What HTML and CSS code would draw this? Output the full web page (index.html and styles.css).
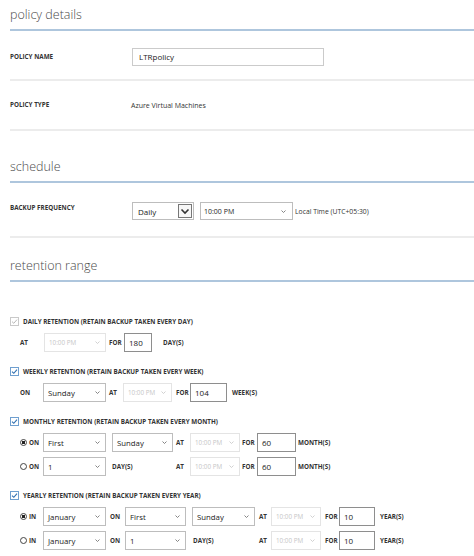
FILE: index.html
```html
<!DOCTYPE html>
<html>
<head>
<meta charset="utf-8">
<link rel="stylesheet" href="styles.css">
</head>
<body>
<div class="page">
  <h2 class="section-title">policy details</h2>
  <div class="field field-name">
    <div class="field-label">Policy name</div>
    <div class="text-input">LTRpolicy</div>
  </div>
  <div class="field">
    <div class="field-label">Policy type</div>
    <div class="field-value">Azure Virtual Machines</div>
  </div>

  <h2 class="section-title mid">schedule</h2>
  <div class="field field-top">
    <div class="field-label">Backup frequency</div>
    <div class="controls">
      <div class="sel sel-box w62">Daily
        <span class="arrow-box"><svg width="10" height="7" viewBox="0 0 10 7"><polyline points="1.5,1.5 5,5 8.5,1.5" fill="none" stroke="#333" stroke-width="1.6"/></svg></span>
      </div>
      <div class="sel time w93">10:00 PM <svg class="chev" width="5" height="3" viewBox="0 0 5 3"><polyline points="0.5,0.5 2.5,2.5 4.5,0.5" fill="none" stroke="#777" stroke-width="0.9"/></svg></div>
      <span class="tz">Local Time (UTC+05:30)</span>
    </div>
  </div>

  <h2 class="section-title ret">retention range</h2>

  <div class="retention">
    <div class="ret-group">
      <div class="ret-check">
        <svg class="cb" width="9" height="9" viewBox="0 0 9 9"><rect x="0.5" y="0.5" width="8" height="8" fill="#fff" stroke="#c9c9c9"/><polyline points="2,4.6 3.8,6.3 7,2.6" fill="none" stroke="#b9b9b9" stroke-width="1"/></svg>
        <span>Daily retention (retain backup taken every day)</span>
      </div>
      <div class="ret-row">
        <span class="lbl w24">At</span>
        <div class="sel dis w62">10:00 PM <svg class="chev" width="5" height="3" viewBox="0 0 5 3"><polyline points="0.5,0.5 2.5,2.5 4.5,0.5" fill="none" stroke="#ccc" stroke-width="0.9"/></svg></div>
        <span class="lbl w18 pl3">For</span>
        <div class="num w28">180</div>
        <span class="lbl pl11">Day(s)</span>
      </div>
    </div>

    <div class="ret-group">
      <div class="ret-check">
        <svg class="cb" width="9" height="9" viewBox="0 0 9 9"><rect x="0.5" y="0.5" width="8" height="8" fill="#fff" stroke="#6f9fcf"/><polyline points="2,4.6 3.8,6.3 7,2.6" fill="none" stroke="#2f6fb0" stroke-width="1.1"/></svg>
        <span>Weekly retention (retain backup taken every week)</span>
      </div>
      <div class="ret-row">
        <span class="lbl w23">On</span>
        <div class="sel w63">Sunday <svg class="chev" width="5" height="3" viewBox="0 0 5 3"><polyline points="0.5,0.5 2.5,2.5 4.5,0.5" fill="none" stroke="#777" stroke-width="0.9"/></svg></div>
        <span class="lbl w17 pl3">At</span>
        <div class="sel dis w49">10:00 PM <svg class="chev" width="5" height="3" viewBox="0 0 5 3"><polyline points="0.5,0.5 2.5,2.5 4.5,0.5" fill="none" stroke="#ccc" stroke-width="0.9"/></svg></div>
        <span class="lbl w18 pl4">For</span>
        <div class="num w37">104</div>
        <span class="lbl pl5">Week(s)</span>
      </div>
    </div>

    <div class="ret-group">
      <div class="ret-check">
        <svg class="cb" width="9" height="9" viewBox="0 0 9 9"><rect x="0.5" y="0.5" width="8" height="8" fill="#fff" stroke="#6f9fcf"/><polyline points="2,4.6 3.8,6.3 7,2.6" fill="none" stroke="#2f6fb0" stroke-width="1.1"/></svg>
        <span>Monthly retention (retain backup taken every month)</span>
      </div>
      <div class="ret-row">
        <span class="lbl radio-lbl w23"><span class="radio on"></span>On</span>
        <div class="sel w63">First <svg class="chev" width="5" height="3" viewBox="0 0 5 3"><polyline points="0.5,0.5 2.5,2.5 4.5,0.5" fill="none" stroke="#777" stroke-width="0.9"/></svg></div>
        <div class="sel w61 ml6">Sunday <svg class="chev" width="5" height="3" viewBox="0 0 5 3"><polyline points="0.5,0.5 2.5,2.5 4.5,0.5" fill="none" stroke="#777" stroke-width="0.9"/></svg></div>
        <span class="lbl w17 pl3">At</span>
        <div class="sel dis w50">10:00 PM <svg class="chev" width="5" height="3" viewBox="0 0 5 3"><polyline points="0.5,0.5 2.5,2.5 4.5,0.5" fill="none" stroke="#ccc" stroke-width="0.9"/></svg></div>
        <span class="lbl w17 pl2">For</span>
        <div class="num w39">60</div>
        <span class="lbl pl2">Month(s)</span>
      </div>
      <div class="ret-row">
        <span class="lbl radio-lbl w23"><span class="radio"></span>On</span>
        <div class="sel w63">1 <svg class="chev" width="5" height="3" viewBox="0 0 5 3"><polyline points="0.5,0.5 2.5,2.5 4.5,0.5" fill="none" stroke="#777" stroke-width="0.9"/></svg></div>
        <span class="lbl w67 pl6">Day(s)</span>
        <span class="lbl w17 pl3">At</span>
        <div class="sel dis w50">10:00 PM <svg class="chev" width="5" height="3" viewBox="0 0 5 3"><polyline points="0.5,0.5 2.5,2.5 4.5,0.5" fill="none" stroke="#ccc" stroke-width="0.9"/></svg></div>
        <span class="lbl w17 pl2">For</span>
        <div class="num w39">60</div>
        <span class="lbl pl2">Month(s)</span>
      </div>
    </div>

    <div class="ret-group">
      <div class="ret-check">
        <svg class="cb" width="9" height="9" viewBox="0 0 9 9"><rect x="0.5" y="0.5" width="8" height="8" fill="#fff" stroke="#6f9fcf"/><polyline points="2,4.6 3.8,6.3 7,2.6" fill="none" stroke="#2f6fb0" stroke-width="1.1"/></svg>
        <span>Yearly retention (retain backup taken every year)</span>
      </div>
      <div class="ret-row">
        <span class="lbl radio-lbl w23"><span class="radio on"></span>In</span>
        <div class="sel w63">January <svg class="chev" width="5" height="3" viewBox="0 0 5 3"><polyline points="0.5,0.5 2.5,2.5 4.5,0.5" fill="none" stroke="#777" stroke-width="0.9"/></svg></div>
        <span class="lbl w19 pl4">On</span>
        <div class="sel w61">First <svg class="chev" width="5" height="3" viewBox="0 0 5 3"><polyline points="0.5,0.5 2.5,2.5 4.5,0.5" fill="none" stroke="#777" stroke-width="0.9"/></svg></div>
        <div class="sel w63 ml6">Sunday <svg class="chev" width="5" height="3" viewBox="0 0 5 3"><polyline points="0.5,0.5 2.5,2.5 4.5,0.5" fill="none" stroke="#777" stroke-width="0.9"/></svg></div>
        <span class="lbl w16 pl4">At</span>
        <div class="sel dis w50">10:00 PM <svg class="chev" width="5" height="3" viewBox="0 0 5 3"><polyline points="0.5,0.5 2.5,2.5 4.5,0.5" fill="none" stroke="#ccc" stroke-width="0.9"/></svg></div>
        <span class="lbl w18 pl4">For</span>
        <div class="num w36">10</div>
        <span class="lbl pl5">Year(s)</span>
      </div>
      <div class="ret-row">
        <span class="lbl radio-lbl w23"><span class="radio"></span>In</span>
        <div class="sel w63">January <svg class="chev" width="5" height="3" viewBox="0 0 5 3"><polyline points="0.5,0.5 2.5,2.5 4.5,0.5" fill="none" stroke="#777" stroke-width="0.9"/></svg></div>
        <span class="lbl w19 pl4">On</span>
        <div class="sel w61">1 <svg class="chev" width="5" height="3" viewBox="0 0 5 3"><polyline points="0.5,0.5 2.5,2.5 4.5,0.5" fill="none" stroke="#777" stroke-width="0.9"/></svg></div>
        <span class="lbl w69 pl7">Day(s)</span>
        <span class="lbl w16 pl4">At</span>
        <div class="sel dis w50">10:00 PM <svg class="chev" width="5" height="3" viewBox="0 0 5 3"><polyline points="0.5,0.5 2.5,2.5 4.5,0.5" fill="none" stroke="#ccc" stroke-width="0.9"/></svg></div>
        <span class="lbl w18 pl4">For</span>
        <div class="num w36">10</div>
        <span class="lbl pl5">Year(s)</span>
      </div>
    </div>
  </div>
</div>
</body>
</html>
```

FILE: styles.css
```css
* { box-sizing: border-box; }

body {
  margin: 0;
  background: #fff;
  font-family: "Open Sans", "Noto Sans", sans-serif;
  color: #333;
}

.page {
  padding-left: 10px;
}

.section-title {
  margin: 0;
  font-size: 12.5px;
  font-weight: 300;
  color: #4a4a4a;
  line-height: 29px;
  border-bottom: 2px solid #aec6dd;
}

.section-title.mid { padding-top: 21px; }
.section-title.ret { padding-top: 13px; }

.field {
  display: flex;
  align-items: center;
  height: 50px;
  border-bottom: 2px solid #ececec;
}

.field-name { padding-top: 3px; }

.field-top {
  align-items: flex-start;
  height: 55px;
  padding-top: 19px;
}

.field-label {
  flex: none;
  width: 122px;
  font-size: 6.3px;
  font-weight: 700;
  text-transform: uppercase;
  line-height: 10px;
  color: #333;
}

.field-top .field-label { margin-top: 1px; }

.field-value {
  font-size: 7px;
  color: #333;
  margin-left: -1px;
}

.text-input {
  width: 192px;
  height: 18px;
  border: 1px solid #cbcbcb;
  padding-left: 6px;
  font-size: 8px;
  line-height: 16px;
  color: #222;
}

.controls {
  display: flex;
  align-items: center;
}

.sel {
  flex: none;
  display: flex;
  align-items: center;
  justify-content: space-between;
  height: 19px;
  border: 1px solid #bdbdbd;
  padding: 0 5px 0 4px;
  font-size: 7.8px;
  color: #222;
  white-space: nowrap;
}

.sel.dis {
  border-color: #e4e4e4;
  color: #c6c6c6;
  font-size: 6.3px;
}

.sel-box {
  height: 18px;
  padding: 0 1px 0 5px;
  font-size: 8px;
}

.arrow-box {
  display: flex;
  align-items: center;
  justify-content: center;
  width: 14px;
  height: 14px;
  border: 1px solid #777;
  background: #f7f7f7;
}

.sel.time {
  margin-left: 6px;
  height: 18px;
  font-size: 7px;
  padding: 0 6px 0 3px;
}

.chev { flex: none; }

.tz {
  margin-left: 2px;
  font-size: 6.8px;
  color: #333;
}

.retention {
  margin-top: 32px;
}

.ret-group { margin-bottom: 12px; }

.ret-check {
  display: flex;
  align-items: center;
  gap: 4px;
  height: 14px;
  font-size: 6.3px;
  font-weight: 700;
  text-transform: uppercase;
  color: #333;
}

.cb { flex: none; }

.ret-row {
  display: flex;
  align-items: center;
  height: 19px;
  margin-top: 5px;
  padding-left: 10px;
}

.lbl {
  flex: none;
  font-size: 6.3px;
  font-weight: 700;
  text-transform: uppercase;
  color: #333;
  white-space: nowrap;
}

.radio-lbl {
  display: flex;
  align-items: center;
  gap: 2px;
}

.radio {
  width: 7px;
  height: 7px;
  border: 1px solid #444;
  border-radius: 50%;
  background: #fff;
}

.radio.on {
  background: radial-gradient(circle, #222 0 1.6px, #fff 1.9px);
}

.num {
  flex: none;
  display: flex;
  align-items: center;
  height: 19px;
  border: 1px solid #8e8e8e;
  padding-left: 4px;
  font-size: 8px;
  color: #222;
}

.w16 { width: 16px; }
.w17 { width: 17px; }
.w18 { width: 18px; }
.w19 { width: 19px; }
.w23 { width: 23px; }
.w24 { width: 24px; }
.w28 { width: 28px; }
.w36 { width: 36px; }
.w37 { width: 37px; }
.w39 { width: 39px; }
.w49 { width: 49px; }
.w50 { width: 50px; }
.w61 { width: 61px; }
.w62 { width: 62px; }
.w63 { width: 63px; }
.w67 { width: 67px; }
.w69 { width: 69px; }
.w93 { width: 93px; }

.pl2 { padding-left: 2px; }
.pl3 { padding-left: 3px; }
.pl4 { padding-left: 4px; }
.pl5 { padding-left: 5px; }
.pl6 { padding-left: 6px; }
.pl7 { padding-left: 7px; }
.pl11 { padding-left: 11px; }
.ml6 { margin-left: 6px; }
```
